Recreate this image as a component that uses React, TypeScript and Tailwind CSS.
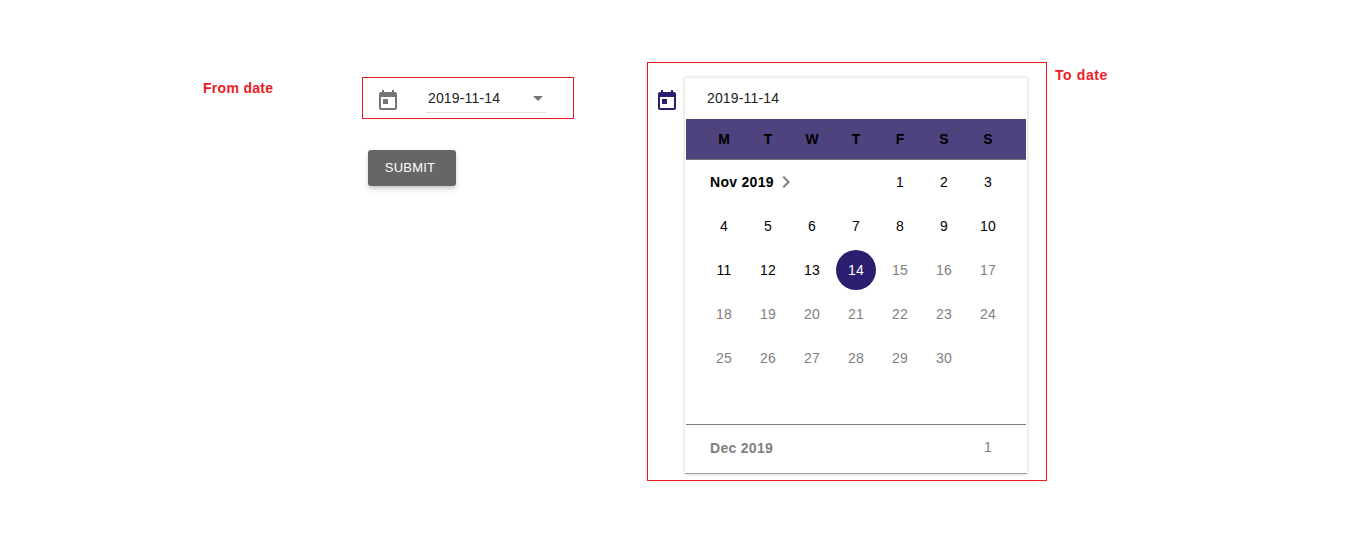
const WEEK_DAYS = ['M', 'T', 'W', 'T', 'F', 'S', 'S'];

// days of November after the "Nov 2019" label, which takes the first four cells
const NOV_DAYS = Array.from({ length: 30 }, (_, i) => i + 1);
const SELECTED = 14;

function TodayIcon({ className }: { className: string }) {
  return (
    <svg viewBox="0 0 24 24" fill="currentColor" className={className}>
      <path d="M19 3h-1V1h-2v2H8V1H6v2H5c-1.11 0-1.99.9-1.99 2L3 19c0 1.1.89 2 2 2h14c1.1 0 2-.9 2-2V5c0-1.1-.9-2-2-2zm0 16H5V8h14v11zM7 10h5v5H7z" />
    </svg>
  );
}

function DayCell({ day }: { day: number }) {
  if (day === SELECTED) {
    return (
      <div className="flex h-11 items-center justify-center">
        <span className="flex h-10 w-10 items-center justify-center rounded-full bg-[#2a1e6e] text-white">
          {day}
        </span>
      </div>
    );
  }
  return (
    <div
      className={
        day < SELECTED
          ? 'flex h-11 items-center justify-center text-black'
          : 'flex h-11 items-center justify-center text-[#808080]'
      }
    >
      {day}
    </div>
  );
}

export default function App() {
  return (
    <div className="flex h-[560px] w-[1360px] bg-white pt-[62px] font-['Liberation_Sans',sans-serif] text-sm tracking-[0.15px]">
      <div className="ml-[203px] w-[159px] pt-[17px] text-sm font-bold leading-[18px] tracking-[0.3px] text-[#ed1c24]">
        From date
      </div>

      <div className="w-[212px] pt-[15px]">
        <div className="flex h-[42px] items-start border border-[#ed1c24] pl-[13px]">
          <TodayIcon className="mt-[11px] h-6 w-6 text-[#757575]" />
          <div className="ml-[26px] mt-[6px] flex h-[29px] w-[120px] items-center justify-between border-b border-[#e0e0e0] pl-[2px] pr-[3px] text-[#212121]">
            <span>2019-11-14</span>
            <span className="h-0 w-0 border-x-[5px] border-t-[5px] border-x-transparent border-t-[#757575]" />
          </div>
        </div>
        <button
          type="button"
          className="ml-[6px] mt-[31px] h-9 w-[88px] rounded-[3px] bg-[#666666] pr-[4px] text-[13px] tracking-[0.2px] text-white shadow-[0_2px_4px_-1px_rgba(0,0,0,0.2),0_4px_6px_0_rgba(0,0,0,0.1)]"
        >
          SUBMIT
        </button>
      </div>

      <div className="ml-[73px] flex h-[419px] w-[400px] border border-[#ed1c24] pl-[7px] pt-[15px]">
        <TodayIcon className="mt-[11px] h-6 w-6 text-[#2a1e6e]" />
        <div className="ml-[6px] flex h-[396px] w-[342px] flex-col border-b border-[#a0a0a0] px-px shadow-[0_0_4px_rgba(0,0,0,0.2)]">
          <div className="flex h-[41px] items-center pb-[2px] pl-[21px] text-[#212121]">2019-11-14</div>

          <div className="h-[41px] border-b border-[#757575] bg-[#4e437f] pl-4">
            <div className="grid h-full w-[308px] grid-cols-7 items-center text-center font-bold tracking-normal text-black">
              {WEEK_DAYS.map((d, i) => (
                <span key={i}>{d}</span>
              ))}
            </div>
          </div>

          <div className="grid h-[264px] w-[324px] auto-rows-[44px] grid-cols-[repeat(7,44px)] pl-4">
            <div className="col-span-4 flex items-center pl-2 font-bold tracking-[0.3px] text-black">
              Nov 2019
              <svg viewBox="0 0 24 24" fill="currentColor" className="h-6 w-6 text-[#808080]">
                <path d="M10 6L8.59 7.41 13.17 12l-4.58 4.59L10 18l6-6z" />
              </svg>
            </div>
            {NOV_DAYS.map((day) => (
              <DayCell key={day} day={day} />
            ))}
          </div>

          <div className="grid h-[48px] flex-1 grid-cols-[repeat(7,44px)] items-center border-t border-[#808080] pl-4 text-[#808080]">
            <div className="col-span-6 pb-[2px] pl-2 font-bold tracking-[0.3px]">Dec 2019</div>
            <div className="pb-[4px] text-center">1</div>
          </div>
        </div>
      </div>

      <div className="ml-[8px] pt-[4px] text-sm font-bold leading-[18px] tracking-[0.6px] text-[#ed1c24]">
        To date
      </div>
    </div>
  );
}
